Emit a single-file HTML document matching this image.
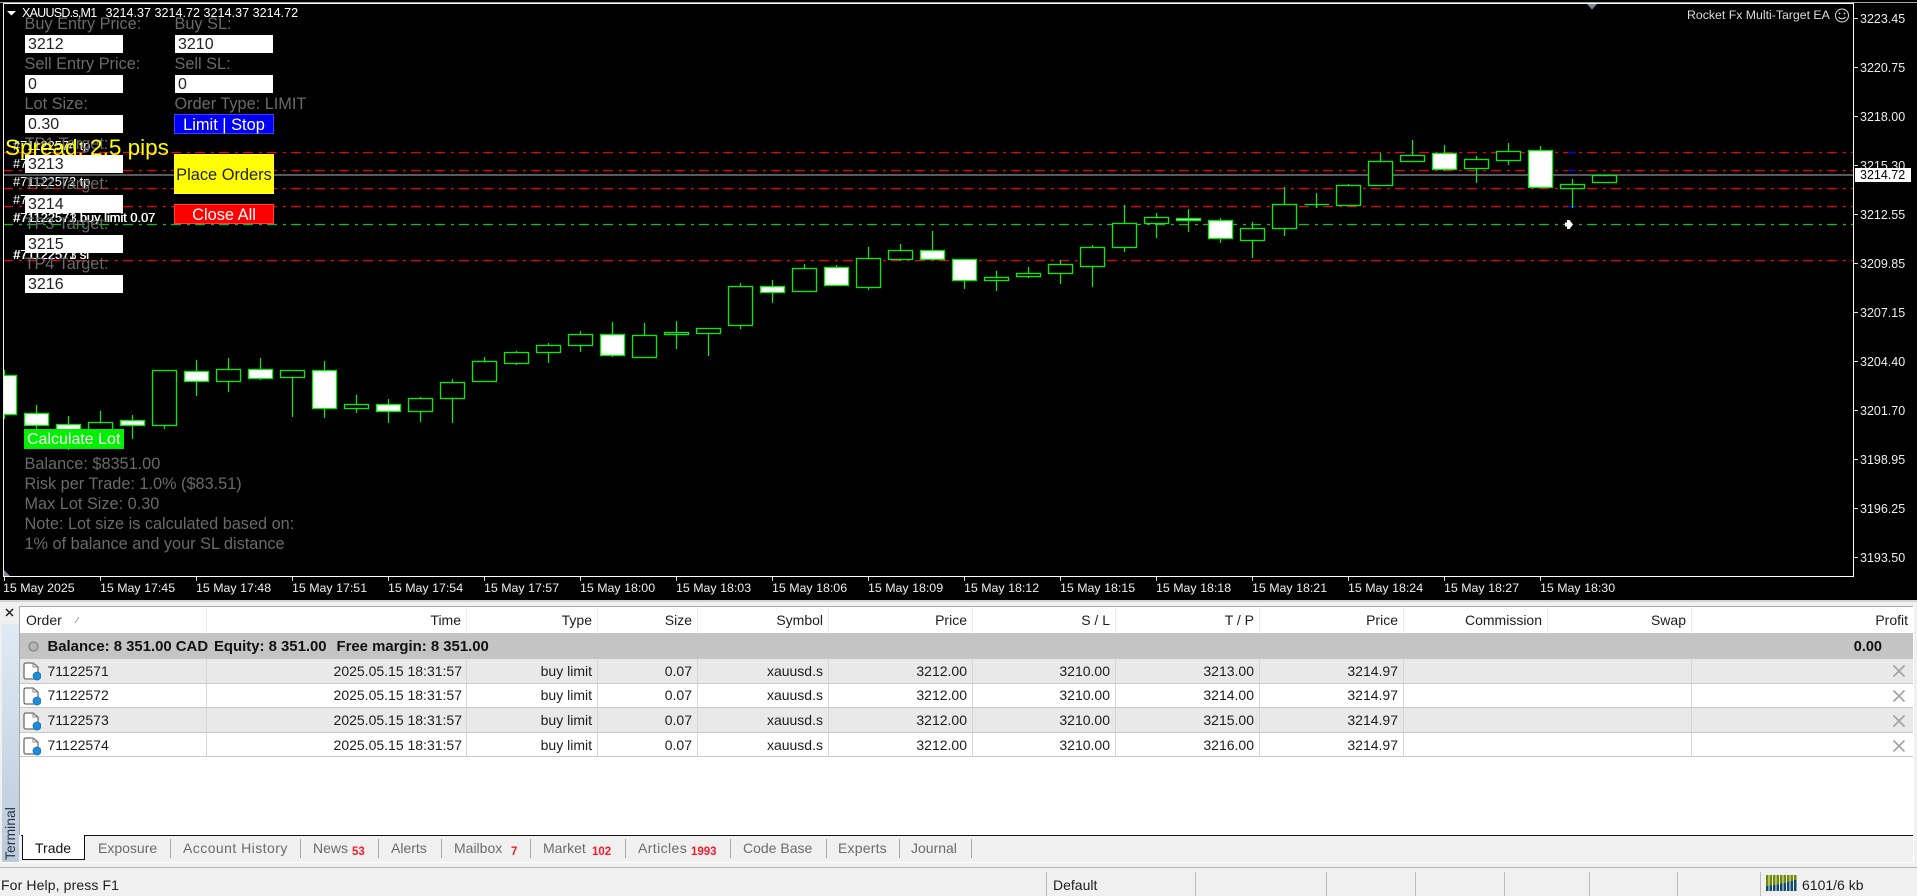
<!DOCTYPE html>
<html><head><meta charset="utf-8"><title>MT4</title>
<style>
html,body{margin:0;padding:0;width:1917px;height:896px;overflow:hidden;background:#f0f0f0;font-family:"Liberation Sans",sans-serif}
.a{position:absolute;white-space:pre}
#chart{position:absolute;left:0;top:0;width:1917px;height:600px;background:#000;overflow:hidden}
.lab{position:absolute;color:#6a6a6a;font-size:16.3px;line-height:20px;white-space:pre;margin:1px 0 0 -.5px}
.inp{position:absolute;width:98px;height:18px;background:#fff;color:#222;font-size:16px;line-height:20px;padding-left:3px;box-sizing:border-box}
.btn{position:absolute;left:174px;width:100px;text-align:center;font-size:16.4px;box-sizing:border-box;border:1px solid rgba(255,255,255,.25)}
.cl{position:absolute;color:#fff;font-size:12.8px;line-height:14px;white-space:pre;left:13px}
.p{position:absolute;left:1860px;color:#eee;font-size:12.5px;line-height:14px;margin-top:-.5px}
.tk{position:absolute;left:1854px;width:4px;height:1px;background:#ddd}
.t{position:absolute;top:581px;color:#eee;font-size:12.4px;line-height:14px;white-space:pre}
.vt{position:absolute;top:577px;width:1px;height:4px;background:#ddd}
#tb{position:absolute;left:19px;top:606px;width:1894px;height:229px;background:#fff;border-top:1px solid #a8a8a8;border-left:1px solid #a8a8a8;box-sizing:border-box}
table{border-collapse:separate;border-spacing:0;table-layout:fixed;width:1893px;font-size:14px;color:#1c1c1c}
td,th{padding:0 5px 0 0;text-align:right;font-weight:normal;white-space:nowrap;overflow:hidden;box-sizing:border-box}
th{height:26px;border-right:1px solid #ececec}
tr.r td{height:24.6px;border-bottom:1.5px solid #c9c9c9;border-right:1.5px solid #d6d6d6}
tr.g td{background:#e9e9e9}
tr.r td.n{border-right:0}
.tab{position:absolute;top:840px;font-size:14px;line-height:16px;color:#6b6b6b;white-space:pre}
.red{position:absolute;top:846px;font-size:11.5px;line-height:13px;color:#f01c2c;font-weight:bold}
.sep{position:absolute;top:839px;width:1px;height:19px;background:#a8a8a8}
.ss{position:absolute;top:872px;width:1px;height:24px;background:#bdbdbd}
.st{position:absolute;top:877px;font-size:14px;line-height:16px;color:#1c1c1c;white-space:pre}
.ic{position:absolute;left:22px;width:19px;height:19px}
.x{position:absolute;left:1892px;width:14px;height:14px}
svg{display:block}
</style></head><body>

<div id="chart">
<svg style="position:absolute;left:0;top:0" width="1917" height="600">
<rect x="0" y="2" width="1917" height="1" fill="#a8a8a8"/>
<g stroke-width="1.2" fill="none">
<path d="M3 175H1854" stroke="#8a8f94" stroke-width="1.2"/>
<g stroke="#f00000" stroke-dasharray="10 6 3 5">
<path d="M3 152.5H1854M3 170.5H1854M3 188.5H1854M3 206.5H1854M3 260.5H1854"/>
</g>
<path d="M3 224.5H1854" stroke="#10c010" stroke-dasharray="10 6 3 5"/>
</g>
<path d="M1568 152.5h8M1568 170.5h8M1568 188.5h8M1568 206.5h8" stroke="#0000ff" stroke-width="1.2"/>
<path stroke="#00f000" stroke-width="1.2" fill="none" d="M4.5 370V419M36.5 405V430M68.5 416V450M100.5 411V436M132.5 415V439M164.5 425V429M196.5 360V396M228.5 358V392M260.5 358V380M292.5 370V417M324.5 361V418M356.5 395V413M388.5 399V423M420.5 397V422M452.5 379V423M484.5 357V362M516.5 351V365M548.5 343V363M580.5 331V352M612.5 322V357M644.5 323V336M676.5 321V349M708.5 333V356M740.5 283V329M772.5 280V303M804.5 264V269M836.5 265V286M868.5 247V290M900.5 244V261M932.5 231V260M964.5 280V289M996.5 271V291M1028.5 267V278M1060.5 260V284M1092.5 245V287M1124.5 205V252M1156.5 213V238M1188.5 209V232M1220.5 218V243M1252.5 222V258M1284.5 187V236M1316.5 193V208M1304.5 204.5H1329M1348.5 184V186M1380.5 153V162M1412.5 140V156M1444.5 145V171M1476.5 156V183M1508.5 143V165M1540.5 146V151M1572.5 179V208"/>
<g stroke="#00f000" stroke-width="1.3" fill="#fff">
<rect x="-7.5" y="375.5" width="24" height="39"/><rect x="24.5" y="413.5" width="24" height="12"/><rect x="56.5" y="424.5" width="24" height="8"/><rect x="120.5" y="420.5" width="24" height="5"/><rect x="184.5" y="371.5" width="24" height="10"/><rect x="248.5" y="369.5" width="24" height="9"/><rect x="312.5" y="370.5" width="24" height="38"/><rect x="376.5" y="404.5" width="24" height="7"/><rect x="600.5" y="334.5" width="24" height="21"/><rect x="760.5" y="286.5" width="24" height="6"/><rect x="824.5" y="267.5" width="24" height="18"/><rect x="920.5" y="250.5" width="24" height="9"/><rect x="952.5" y="259.5" width="24" height="21"/><rect x="1176.5" y="218.5" width="24" height="2"/><rect x="1208.5" y="220.5" width="24" height="18"/><rect x="1432.5" y="153.5" width="24" height="16"/><rect x="1528.5" y="150.5" width="24" height="37"/>
</g>
<g stroke="#00f000" stroke-width="1.3" fill="#000">
<rect x="88.5" y="422.5" width="24" height="10"/><rect x="152.5" y="370.5" width="24" height="55"/><rect x="216.5" y="369.5" width="24" height="12"/><rect x="280.5" y="370.5" width="24" height="7"/><rect x="344.5" y="404.5" width="24" height="4"/><rect x="408.5" y="398.5" width="24" height="13"/><rect x="440.5" y="382.5" width="24" height="16"/><rect x="472.5" y="361.5" width="24" height="20"/><rect x="504.5" y="352.5" width="24" height="11"/><rect x="536.5" y="345.5" width="24" height="7"/><rect x="568.5" y="334.5" width="24" height="11"/><rect x="632.5" y="335.5" width="24" height="22"/><rect x="664.5" y="332.5" width="24" height="2"/><rect x="696.5" y="328.5" width="24" height="5"/><rect x="728.5" y="286.5" width="24" height="39"/><rect x="792.5" y="268.5" width="24" height="23"/><rect x="856.5" y="258.5" width="24" height="29"/><rect x="888.5" y="250.5" width="24" height="9"/><rect x="984.5" y="277.5" width="24" height="3"/><rect x="1016.5" y="273.5" width="24" height="3"/><rect x="1048.5" y="264.5" width="24" height="9"/><rect x="1080.5" y="247.5" width="24" height="19"/><rect x="1112.5" y="223.5" width="24" height="24"/><rect x="1144.5" y="217.5" width="24" height="6"/><rect x="1240.5" y="228.5" width="24" height="12"/><rect x="1272.5" y="204.5" width="24" height="24"/><rect x="1336.5" y="185.5" width="24" height="20"/><rect x="1368.5" y="161.5" width="24" height="24"/><rect x="1400.5" y="155.5" width="24" height="6"/><rect x="1464.5" y="159.5" width="24" height="9"/><rect x="1496.5" y="151.5" width="24" height="9"/><rect x="1560.5" y="184.5" width="24" height="4"/><rect x="1592.5" y="175.5" width="24" height="7"/>
</g>
<path d="M1565 222.5h2v-2.5h2.5l3.5 4.5l-3.5 4.5h-2.5v-2.5h-2z" fill="#fff"/>
<rect x="0" y="0" width="3" height="2" fill="#000"/><rect x="0" y="3" width="3" height="597" fill="#000"/>
<rect x="3" y="3" width="1851" height="1" fill="#fff"/><rect x="3" y="3" width="1" height="574" fill="#eee"/>
<rect x="1853" y="3" width="1" height="574" fill="#fff"/><rect x="3" y="576" width="1851" height="1" fill="#fff"/>
<path d="M7 11h9l-4.5 4.5z" fill="#fff"/>
<path d="M1587 4h10l-5 5.5z" fill="#7d8894"/>
<path d="M4 570l6 6h-6z" fill="#7d8894"/>
<circle cx="1842" cy="15.5" r="6.5" fill="none" stroke="#ddd" stroke-width="1"/>
<circle cx="1839.5" cy="13.5" r=".9" fill="#ddd"/><circle cx="1844.5" cy="13.5" r=".9" fill="#ddd"/>
<path d="M1838.5 17q3.5 3.5 7 0" fill="none" stroke="#ddd"/>
</svg>

<div class="a" style="left:22px;top:6px;color:#fff;font-size:12.5px;line-height:14px;letter-spacing:-.75px">XAUUSD.s,M1</div>
<div class="a" style="left:105.5px;top:6px;color:#fff;font-size:12.6px;line-height:14px">3214.37 3214.72 3214.37 3214.72</div>
<div class="a" style="left:1687px;top:8px;color:#ddd;font-size:12.3px;line-height:14px">Rocket Fx Multi-Target EA</div>

<div class="cl" style="top:139px">#71122574 tp</div>
<div class="cl" style="top:157px">#71122573 tp</div>
<div class="cl" style="top:175px">#71122572 tp</div>
<div class="cl" style="top:193px">#71122571 tp</div>
<div class="cl" style="top:211px">#71122571 buy limit 0.07</div>
<div class="cl" style="top:211px;left:13.5px">#71122573 buy limit 0.07</div>
<div class="cl" style="top:248px">#71122571 sl</div>
<div class="cl" style="top:248px;left:13.5px">#71122573 sl</div>

<div class="lab" style="left:25px;top:13px">Buy Entry Price:</div>
<div class="lab" style="left:175px;top:13px">Buy SL:</div>
<div class="inp" style="left:25px;top:35px">3212</div>
<div class="inp" style="left:175px;top:35px">3210</div>
<div class="lab" style="left:25px;top:53px">Sell Entry Price:</div>
<div class="lab" style="left:175px;top:53px">Sell SL:</div>
<div class="inp" style="left:25px;top:75px">0</div>
<div class="inp" style="left:175px;top:75px">0</div>
<div class="lab" style="left:25px;top:93px">Lot Size:</div>
<div class="lab" style="left:175px;top:93px">Order Type: LIMIT</div>
<div class="inp" style="left:25px;top:115px">0.30</div>
<div class="btn" style="top:114px;height:20px;line-height:20px;background:#0000f8;color:#fff">Limit | Stop</div>
<div class="lab" style="left:25px;top:133px">TP1 Target:</div>
<div class="inp" style="left:25px;top:155px">3213</div>
<div class="lab" style="left:25px;top:173px">TP2 Target:</div>
<div class="inp" style="left:25px;top:195px">3214</div>
<div class="lab" style="left:25px;top:213px">TP3 Target:</div>
<div class="inp" style="left:25px;top:235px">3215</div>
<div class="lab" style="left:25px;top:253px">TP4 Target:</div>
<div class="inp" style="left:25px;top:275px">3216</div>
<div class="btn" style="top:154px;height:40px;line-height:40px;background:#ffff00;color:#222">Place Orders</div>
<div class="btn" style="top:204px;height:20px;line-height:20px;background:#ff0000;color:#fff">Close All</div>
<div class="a" style="left:5px;top:135px;color:#ffff00;font-size:22.5px;line-height:26px">Spread: 2.5 pips</div>

<div class="a" style="left:24px;top:429px;width:100px;height:20px;background:#00f000;color:#fff;font-size:16px;line-height:22px;padding-left:3px;box-sizing:border-box;overflow:hidden">Calculate Lot</div>
<div class="lab" style="left:25px;top:453px">Balance: $8351.00</div>
<div class="lab" style="left:25px;top:473px">Risk per Trade: 1.0% ($83.51)</div>
<div class="lab" style="left:25px;top:493px">Max Lot Size: 0.30</div>
<div class="lab" style="left:25px;top:513px">Note: Lot size is calculated based on:</div>
<div class="lab" style="left:25px;top:533px">1% of balance and your SL distance</div>

<div class="tk" style="top:18px"></div><div class="p" style="top:12px">3223.45</div>
<div class="tk" style="top:67px"></div><div class="p" style="top:61px">3220.75</div>
<div class="tk" style="top:116px"></div><div class="p" style="top:110px">3218.00</div>
<div class="tk" style="top:165px"></div><div class="p" style="top:159px">3215.30</div>
<div class="tk" style="top:214px"></div><div class="p" style="top:208px">3212.55</div>
<div class="tk" style="top:263px"></div><div class="p" style="top:257px">3209.85</div>
<div class="tk" style="top:312px"></div><div class="p" style="top:306px">3207.15</div>
<div class="tk" style="top:361px"></div><div class="p" style="top:355px">3204.40</div>
<div class="tk" style="top:410px"></div><div class="p" style="top:404px">3201.70</div>
<div class="tk" style="top:459px"></div><div class="p" style="top:453px">3198.95</div>
<div class="tk" style="top:508px"></div><div class="p" style="top:502px">3196.25</div>
<div class="tk" style="top:557px"></div><div class="p" style="top:551px">3193.50</div>
<div class="a" style="left:1855px;top:168px;width:56px;height:14px;background:#fff;color:#000;font-size:12.5px;line-height:14px;padding-left:5px;box-sizing:border-box">3214.72</div>

<div class="vt" style="left:4px"></div><div class="t" style="left:3px">15 May 2025</div>
<div class="vt" style="left:100px"></div><div class="t" style="left:100px">15 May 17:45</div>
<div class="vt" style="left:196px"></div><div class="t" style="left:196px">15 May 17:48</div>
<div class="vt" style="left:292px"></div><div class="t" style="left:292px">15 May 17:51</div>
<div class="vt" style="left:388px"></div><div class="t" style="left:388px">15 May 17:54</div>
<div class="vt" style="left:484px"></div><div class="t" style="left:484px">15 May 17:57</div>
<div class="vt" style="left:580px"></div><div class="t" style="left:580px">15 May 18:00</div>
<div class="vt" style="left:676px"></div><div class="t" style="left:676px">15 May 18:03</div>
<div class="vt" style="left:772px"></div><div class="t" style="left:772px">15 May 18:06</div>
<div class="vt" style="left:868px"></div><div class="t" style="left:868px">15 May 18:09</div>
<div class="vt" style="left:964px"></div><div class="t" style="left:964px">15 May 18:12</div>
<div class="vt" style="left:1060px"></div><div class="t" style="left:1060px">15 May 18:15</div>
<div class="vt" style="left:1156px"></div><div class="t" style="left:1156px">15 May 18:18</div>
<div class="vt" style="left:1252px"></div><div class="t" style="left:1252px">15 May 18:21</div>
<div class="vt" style="left:1348px"></div><div class="t" style="left:1348px">15 May 18:24</div>
<div class="vt" style="left:1444px"></div><div class="t" style="left:1444px">15 May 18:27</div>
<div class="vt" style="left:1540px"></div><div class="t" style="left:1540px">15 May 18:30</div>
</div>

<div class="a" style="left:0;top:600px;width:1917px;height:2px;background:#d4d4d4"></div>
<svg class="a" style="left:5px;top:608px" width="9" height="9"><path d="M1 1L8 8M8 1L1 8" stroke="#222" stroke-width="1.5"/></svg>
<div class="a" style="left:2px;top:624px;width:17px;height:238px;background:linear-gradient(#dfeaf5,#b9cadc)"></div>
<div class="a" style="left:3px;top:860px;color:#2c3440;font-size:14px;line-height:15px;transform-origin:0 0;transform:rotate(-90deg)">Terminal</div>

<div id="tb">
<table>
<colgroup><col style="width:187px"><col style="width:260px"><col style="width:131px"><col style="width:100px"><col style="width:131px"><col style="width:144px"><col style="width:143px"><col style="width:144px"><col style="width:144px"><col style="width:144px"><col style="width:144px"><col style="width:221px"></colgroup>
<tr><th style="text-align:left;padding-left:6px">Order</th><th>Time</th><th>Type</th><th>Size</th><th>Symbol</th><th>Price</th><th>S / L</th><th>T / P</th><th>Price</th><th>Commission</th><th>Swap</th><th style="border:0">Profit</th></tr>
<tr><td colspan="12" style="height:26px;background:#c4c4c4;padding:0"></td></tr>
<tr class="r g"><td style="text-align:left;padding-left:27.5px">71122571</td><td style="padding-right:4px">2025.05.15 18:31:57</td><td>buy limit</td><td>0.07</td><td>xauusd.s</td><td>3212.00</td><td>3210.00</td><td>3213.00</td><td>3214.97</td><td class="n"></td><td></td><td class="n"></td></tr>
<tr class="r"><td style="text-align:left;padding-left:27.5px">71122572</td><td style="padding-right:4px">2025.05.15 18:31:57</td><td>buy limit</td><td>0.07</td><td>xauusd.s</td><td>3212.00</td><td>3210.00</td><td>3214.00</td><td>3214.97</td><td class="n"></td><td></td><td class="n"></td></tr>
<tr class="r g"><td style="text-align:left;padding-left:27.5px">71122573</td><td style="padding-right:4px">2025.05.15 18:31:57</td><td>buy limit</td><td>0.07</td><td>xauusd.s</td><td>3212.00</td><td>3210.00</td><td>3215.00</td><td>3214.97</td><td class="n"></td><td></td><td class="n"></td></tr>
<tr class="r"><td style="text-align:left;padding-left:27.5px">71122574</td><td style="padding-right:4px">2025.05.15 18:31:57</td><td>buy limit</td><td>0.07</td><td>xauusd.s</td><td>3212.00</td><td>3210.00</td><td>3216.00</td><td>3214.97</td><td class="n"></td><td></td><td class="n"></td></tr>
</table>
</div>

<svg class="a" style="left:74px;top:616px" width="8" height="8"><path d="M1 7L5 1" stroke="#999"/></svg>
<svg class="a" style="left:27px;top:640px" width="13" height="13"><circle cx="6.5" cy="6.5" r="4.5" fill="#b4b4b4" stroke="#8c8c8c" stroke-width="1.5"/></svg>
<div class="a" style="left:47.5px;top:639px;font-size:14.9px;line-height:17px;font-weight:bold;color:#111">Balance: 8 351.00 CAD</div>
<div class="a" style="left:214px;top:639px;font-size:14.9px;line-height:17px;font-weight:bold;color:#111">Equity: 8 351.00</div>
<div class="a" style="left:336.5px;top:639px;font-size:14.9px;line-height:17px;font-weight:bold;color:#111">Free margin: 8 351.00</div>
<div class="a" style="left:1850px;top:639px;width:32px;text-align:right;font-size:14.5px;line-height:17px;font-weight:bold;color:#111">0.00</div>

<svg class="ic" style="top:662px" viewBox="0 0 19 19"><path d="M2 3q0-2 2-2h7l5 4v11q0 1-1 1H4q-2 0-2-2z" fill="#fff" stroke="#6e6e6e" stroke-width="1.3"/><path d="M11 1v4h5" fill="none" stroke="#8a8a8a"/><circle cx="15" cy="14" r="4" fill="#1b8ddc" stroke="#0f6cb0" stroke-width=".7"/></svg>
<svg class="ic" style="top:687px" viewBox="0 0 19 19"><path d="M2 3q0-2 2-2h7l5 4v11q0 1-1 1H4q-2 0-2-2z" fill="#fff" stroke="#6e6e6e" stroke-width="1.3"/><path d="M11 1v4h5" fill="none" stroke="#8a8a8a"/><circle cx="15" cy="14" r="4" fill="#1b8ddc" stroke="#0f6cb0" stroke-width=".7"/></svg>
<svg class="ic" style="top:712px" viewBox="0 0 19 19"><path d="M2 3q0-2 2-2h7l5 4v11q0 1-1 1H4q-2 0-2-2z" fill="#fff" stroke="#6e6e6e" stroke-width="1.3"/><path d="M11 1v4h5" fill="none" stroke="#8a8a8a"/><circle cx="15" cy="14" r="4" fill="#1b8ddc" stroke="#0f6cb0" stroke-width=".7"/></svg>
<svg class="ic" style="top:737px" viewBox="0 0 19 19"><path d="M2 3q0-2 2-2h7l5 4v11q0 1-1 1H4q-2 0-2-2z" fill="#fff" stroke="#6e6e6e" stroke-width="1.3"/><path d="M11 1v4h5" fill="none" stroke="#8a8a8a"/><circle cx="15" cy="14" r="4" fill="#1b8ddc" stroke="#0f6cb0" stroke-width=".7"/></svg>

<svg class="x" style="top:664px" viewBox="0 0 14 14"><path d="M1.5 1.5L12.5 12.5M12.5 1.5L1.5 12.5" stroke="#a2a2a2" stroke-width="1.6"/></svg>
<svg class="x" style="top:689px" viewBox="0 0 14 14"><path d="M1.5 1.5L12.5 12.5M12.5 1.5L1.5 12.5" stroke="#a2a2a2" stroke-width="1.6"/></svg>
<svg class="x" style="top:714px" viewBox="0 0 14 14"><path d="M1.5 1.5L12.5 12.5M12.5 1.5L1.5 12.5" stroke="#a2a2a2" stroke-width="1.6"/></svg>
<svg class="x" style="top:739px" viewBox="0 0 14 14"><path d="M1.5 1.5L12.5 12.5M12.5 1.5L1.5 12.5" stroke="#a2a2a2" stroke-width="1.6"/></svg>

<div class="a" style="left:21px;top:835px;width:1892px;height:1px;background:#111"></div>
<div class="a" style="left:22px;top:835px;width:63px;height:25px;background:#fff;border:1px solid #111;border-top:0;border-bottom-width:1.5px;box-sizing:border-box"></div>
<div class="tab" style="left:35px;color:#111">Trade</div>
<div class="tab" style="left:98px">Exposure</div><div class="sep" style="left:170px"></div>
<div class="tab" style="left:183px;letter-spacing:.45px">Account History</div><div class="sep" style="left:300px"></div>
<div class="tab" style="left:313px">News</div><div class="red" style="left:352px">53</div><div class="sep" style="left:378px"></div>
<div class="tab" style="left:391px">Alerts</div><div class="sep" style="left:441px"></div>
<div class="tab" style="left:454px">Mailbox</div><div class="red" style="left:511px">7</div><div class="sep" style="left:530px"></div>
<div class="tab" style="left:543px">Market</div><div class="red" style="left:592px">102</div><div class="sep" style="left:625px"></div>
<div class="tab" style="left:638px;letter-spacing:.4px">Articles</div><div class="red" style="left:691px">1993</div><div class="sep" style="left:730px"></div>
<div class="tab" style="left:743px">Code Base</div><div class="sep" style="left:826px"></div>
<div class="tab" style="left:838px;letter-spacing:.2px">Experts</div><div class="sep" style="left:899px"></div>
<div class="tab" style="left:911px">Journal</div><div class="sep" style="left:971px"></div>

<div class="a" style="left:0;top:862px;width:1914px;height:1px;background:#fff"></div>
<div class="a" style="left:1913px;top:606px;width:1px;height:257px;background:#fff"></div>
<div class="a" style="left:0;top:867px;width:1917px;height:1px;background:#b4b4b4"></div>

<div class="st" style="left:1px;letter-spacing:.12px">For Help, press F1</div>
<div class="ss" style="left:1046px"></div><div class="st" style="left:1053px">Default</div>
<div class="ss" style="left:1195px"></div><div class="ss" style="left:1326px"></div><div class="ss" style="left:1415px"></div><div class="ss" style="left:1504px"></div><div class="ss" style="left:1589px"></div><div class="ss" style="left:1677px"></div><div class="ss" style="left:1760px"></div>
<svg class="a" style="left:1766px;top:875px" width="32" height="16">
<g fill="#6f8a00"><rect x="0" y="0" width="2.5" height="16"/><rect x="3.5" y="0" width="2.5" height="16"/><rect x="7" y="0" width="2.5" height="16"/><rect x="10.5" y="0" width="2.5" height="16"/><rect x="14" y="0" width="2.5" height="16"/><rect x="17.5" y="0" width="2.5" height="16"/><rect x="21" y="0" width="2.5" height="16"/><rect x="24.5" y="0" width="2.5" height="16"/><rect x="28" y="0" width="2.5" height="16"/></g>
<g fill="#0f4a70"><rect x="0" y="11" width="2.5" height="5"/><rect x="3.5" y="10.5" width="2.5" height="5.5"/><rect x="7" y="10" width="2.5" height="6"/><rect x="10.5" y="9.5" width="2.5" height="6.5"/><rect x="14" y="8.5" width="2.5" height="7.5"/><rect x="17.5" y="8" width="2.5" height="8"/><rect x="21" y="7" width="2.5" height="9"/><rect x="24.5" y="6" width="2.5" height="10"/><rect x="28" y="5" width="2.5" height="11"/></g>
</svg>
<div class="st" style="left:1802px">6101/6 kb</div>
</body></html>
